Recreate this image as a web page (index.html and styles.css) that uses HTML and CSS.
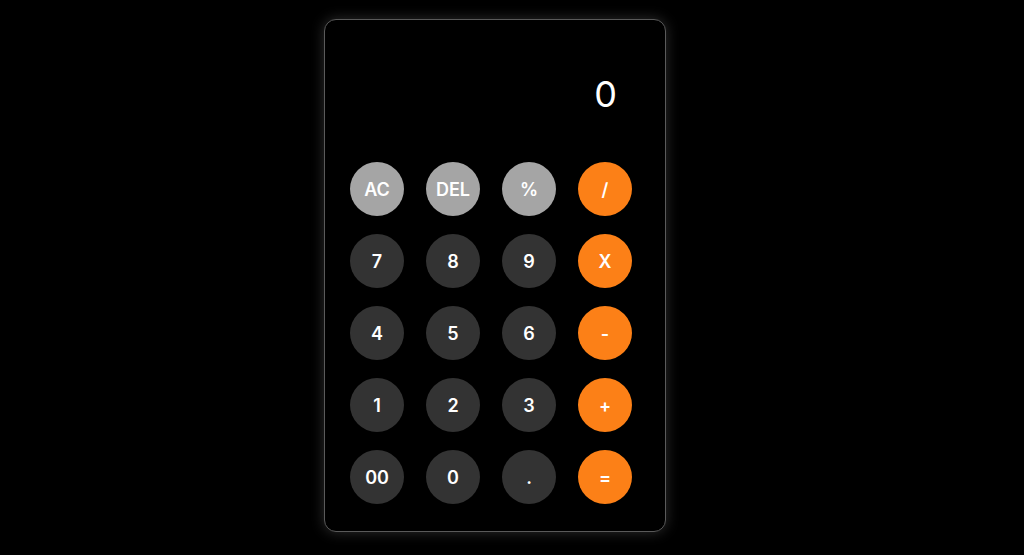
FILE: index.html
```html
<!DOCTYPE html>
<html lang="en">
<head>
<meta charset="utf-8">
<title>Calculator</title>
<link rel="stylesheet" href="styles.css">
</head>
<body>
<div class="calculator">
  <div class="display">0</div>
  <div class="keys">
    <button class="key fn">AC</button>
    <button class="key fn">DEL</button>
    <button class="key fn">%</button>
    <button class="key op">/</button>
    <button class="key">7</button>
    <button class="key">8</button>
    <button class="key">9</button>
    <button class="key op">X</button>
    <button class="key">4</button>
    <button class="key">5</button>
    <button class="key">6</button>
    <button class="key op">-</button>
    <button class="key">1</button>
    <button class="key">2</button>
    <button class="key">3</button>
    <button class="key op">+</button>
    <button class="key">00</button>
    <button class="key">0</button>
    <button class="key">.</button>
    <button class="key op">=</button>
  </div>
</div>
</body>
</html>
```
FILE: styles.css
```css
html, body {
  margin: 0;
  padding: 0;
  background: #000;
  height: 100%;
  overflow: hidden;
}
body {
  font-family: "Inter", "Liberation Sans", sans-serif;
}
.calculator {
  box-sizing: border-box;
  width: 342px;
  height: 513px;
  margin: 19px 0 0 324px;
  border: 1px solid #5a5a5a;
  border-radius: 12px;
  background: #000;
  box-shadow: 0 0 14px rgba(255, 255, 255, 0.18);
  padding: 0 33px 0 25px;
  display: flex;
  flex-direction: column;
}
.display {
  height: 142px;
  box-sizing: border-box;
  padding: 52px 15px 0 0;
  text-align: right;
  color: #fff;
  font-size: 36px;
  font-weight: 400;
  line-height: 44px;
}
.keys {
  display: grid;
  grid-template-columns: repeat(4, 54px);
  grid-auto-rows: 54px;
  column-gap: 22px;
  row-gap: 18px;
}
.key {
  width: 54px;
  height: 54px;
  border: none;
  border-radius: 50%;
  background: #333333;
  color: #fff;
  font-family: "Inter", "Liberation Sans", sans-serif;
  font-size: 18px;
  font-weight: 600;
  padding: 0;
  display: flex;
  align-items: center;
  justify-content: center;
}
.key.fn {
  background: #a5a5a5;
}
.key.op {
  background: #fc8017;
}
```
